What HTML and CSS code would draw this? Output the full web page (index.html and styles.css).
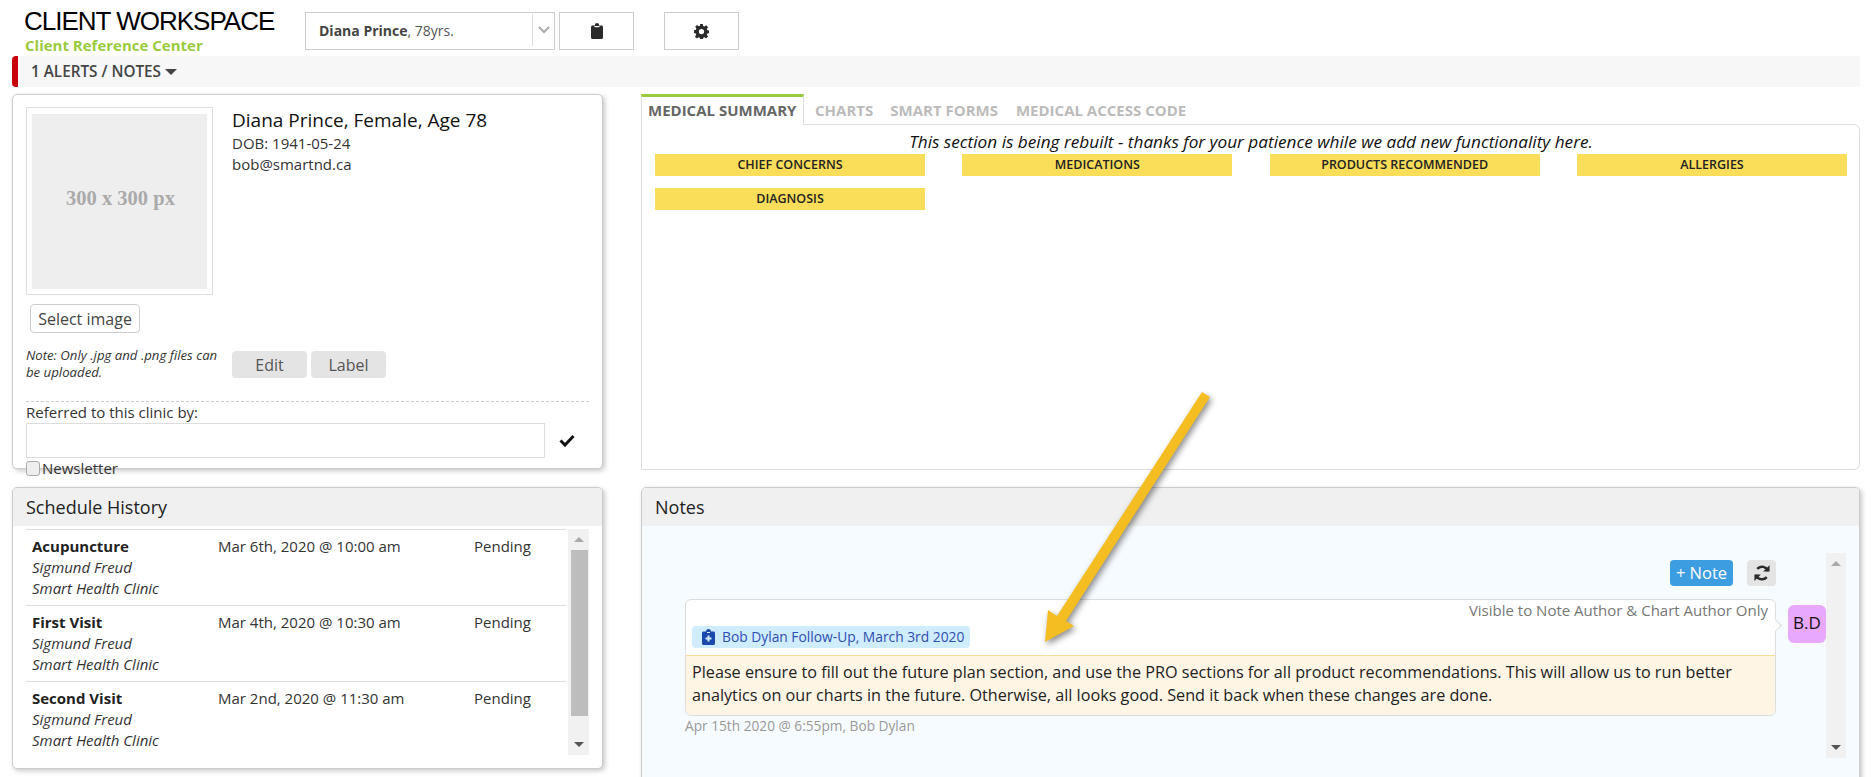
FILE: index.html
```html
<!DOCTYPE html>
<html lang="en">
<head>
<meta charset="utf-8">
<title>Client Workspace</title>
<link rel="stylesheet" href="styles.css">
</head>
<body>
<header class="topbar">
  <div class="brand">
    <div class="brand-title">CLIENT WORKSPACE</div>
    <div class="brand-sub">Client Reference Center</div>
  </div>
  <div class="client-select">
    <div class="client-name"><b>Diana Prince</b>, 78yrs.</div>
    <div class="client-caret"><svg width="14" height="10" viewBox="0 0 14 10"><path d="M2 2l5 5 5-5" fill="none" stroke="#aaa" stroke-width="2"/></svg></div>
  </div>
  <button class="tool-btn"><svg width="12" height="16" viewBox="0 0 12 16"><path d="M1.500 2.500H4V1.600C4 .8 4.800 0 6 0s2 .8 2 1.600v.9h2.500c.8 0 1.500.7 1.500 1.500v10.500c0 .8-.7 1.500-1.500 1.500h-9C.7 16 0 15.300 0 14.500V4c0-.8.7-1.500 1.500-1.500z" fill="#2b2b2b"/><rect x="3.500" y="3" width="5" height="1.200" fill="#fff"/></svg></button>
  <button class="tool-btn tool-btn-gap"><svg width="15" height="15" viewBox="0 0 16 16"><path fill="#2b2b2b" fill-rule="evenodd" d="M6.600 0h2.800l.4 2.200 1.300.55 1.850-1.300 2 2-1.300 1.850.55 1.300 2.200.4v2.800l-2.200.4-.55 1.300 1.300 1.850-2 2-1.850-1.300-1.300.55-.4 2.200H6.600l-.4-2.200-1.300-.55-1.850 1.300-2-2 1.300-1.850-.55-1.300L-.2 9.400V6.600l2.200-.4.55-1.300-1.300-1.850 2-2 1.850 1.300 1.300-.55zM8 5.200a2.800 2.800 0 1 0 0 5.600 2.800 2.800 0 0 0 0-5.600z"/></svg></button>
</header>

<div class="alert-bar">1 ALERTS / NOTES <span class="alert-caret"></span></div>

<main class="layout">
  <section class="card profile">
    <div class="profile-top">
      <div class="profile-left">
        <div class="photo-frame"><div class="photo">300 x 300 px</div></div>
        <button class="select-image">Select image</button>
        <p class="upload-note">Note: Only .jpg and .png files can be uploaded.</p>
      </div>
      <div class="profile-right">
        <div class="profile-info">
          <h1 class="profile-name">Diana Prince, Female, Age 78</h1>
          <div>DOB: 1941-05-24</div>
          <div>bob@smartnd.ca</div>
        </div>
        <div class="profile-actions">
          <button class="grey-btn">Edit</button>
          <button class="grey-btn">Label</button>
        </div>
      </div>
    </div>
    <div class="referred">
      <label class="referred-label" for="ref">Referred to this clinic by:</label>
      <div class="referred-row">
        <input class="referred-input" id="ref" type="text">
        <svg class="check" width="16" height="13" viewBox="0 0 16 13"><path d="M1.500 6.500l4.500 4.500 8.500-9" fill="none" stroke="#111" stroke-width="3"/></svg>
      </div>
      <label class="newsletter"><span class="fake-check"></span>Newsletter</label>
    </div>
  </section>

  <section class="tabs-area">
    <nav class="tabs">
      <span class="tab active">MEDICAL SUMMARY</span>
      <span class="tab">CHARTS</span>
      <span class="tab">SMART FORMS</span>
      <span class="tab">MEDICAL ACCESS CODE</span>
    </nav>
    <div class="tab-panel">
      <p class="rebuild-note">This section is being rebuilt - thanks for your patience while we add new functionality here.</p>
      <div class="summary-grid">
        <div class="summary-head">CHIEF CONCERNS</div>
        <div class="summary-head">MEDICATIONS</div>
        <div class="summary-head">PRODUCTS RECOMMENDED</div>
        <div class="summary-head">ALLERGIES</div>
        <div class="summary-head">DIAGNOSIS</div>
      </div>
    </div>
  </section>

  <section class="card schedule">
    <h2 class="card-head">Schedule History</h2>
    <div class="schedule-body">
      <div class="schedule-list">
        <div class="visit">
          <div class="visit-main"><b>Acupuncture</b><i>Sigmund Freud</i><i>Smart Health Clinic</i></div>
          <div class="visit-date">Mar 6th, 2020 @ 10:00 am</div>
          <div>Pending</div>
        </div>
        <div class="visit">
          <div class="visit-main"><b>First Visit</b><i>Sigmund Freud</i><i>Smart Health Clinic</i></div>
          <div class="visit-date">Mar 4th, 2020 @ 10:30 am</div>
          <div>Pending</div>
        </div>
        <div class="visit">
          <div class="visit-main"><b>Second Visit</b><i>Sigmund Freud</i><i>Smart Health Clinic</i></div>
          <div class="visit-date">Mar 2nd, 2020 @ 11:30 am</div>
          <div>Pending</div>
        </div>
      </div>
      <div class="scrollbar schedule-scroll">
        <span class="arrow-up"></span>
        <span class="thumb"></span>
        <span class="arrow-down"></span>
      </div>
    </div>
  </section>

  <section class="card notes">
    <h2 class="card-head">Notes</h2>
    <div class="notes-body">
      <div class="notes-content">
        <div class="notes-actions">
          <button class="note-btn">+ Note</button>
          <button class="refresh-btn"><svg width="18" height="18" viewBox="0 0 16 16"><path d="M13.300 6.500A5.500 5.500 0 0 0 3.800 4.300" fill="none" stroke="#2b2b2b" stroke-width="2.200"/><path d="M14.700 1v5.600H9z" fill="#2b2b2b"/><path d="M2.700 9.500a5.500 5.500 0 0 0 9.500 2.200" fill="none" stroke="#2b2b2b" stroke-width="2.200"/><path d="M1.300 15V9.400H7z" fill="#2b2b2b"/></svg></button>
        </div>
        <div class="note-row">
          <div class="note-column">
            <article class="note">
              <div class="note-top">
                <div class="note-visibility">Visible to Note Author &amp; Chart Author Only</div>
                <span class="note-pill">
                  <svg width="13" height="16" viewBox="0 0 13 16"><path fill="#1a49ab" fill-rule="evenodd" d="M1.500 2.500H4C4 1 5 0 6.500 0S9 1 9 2.500h2.500c.8 0 1.500.7 1.500 1.500v10.500c0 .8-.7 1.500-1.500 1.500h-10C.7 16 0 15.300 0 14.500V4c0-.8.7-1.500 1.500-1.500zM5.500 6.500v2h-2v2h2v2h2v-2h2v-2h-2v-2zM5 3v1h3V3z"/></svg>
                  Bob Dylan Follow-Up, March 3rd 2020
                </span>
              </div>
              <div class="note-text">Please ensure to fill out the future plan section, and use the PRO sections for all product recommendations. This will allow us to run better analytics on our charts in the future. Otherwise, all looks good. Send it back when these changes are done.</div>
              <span class="note-tail"></span>
            </article>
            <div class="note-meta">Apr 15th 2020 @ 6:55pm, Bob Dylan</div>
          </div>
          <div class="avatar">B.D</div>
        </div>
      </div>
      <div class="scrollbar notes-scroll">
        <span class="arrow-up"></span>
        <span class="arrow-down"></span>
      </div>
    </div>
  </section>
</main>

<svg class="callout" width="1871" height="777" viewBox="0 0 1871 777"><path d="M1202 392l8 5-144 224 8 5-29 16 3-32 9 6z" fill="#f4bd22"/></svg>
</body>
</html>
```

FILE: styles.css
```css
* { box-sizing: border-box; }
html, body { margin: 0; height: 100%; overflow: hidden; background: #fff; }
body { font-family: "Open Sans", "Liberation Sans", sans-serif; font-size: 15px; line-height: 21px; color: #222; }
button { font-family: inherit; cursor: pointer; }

.topbar { display: flex; align-items: flex-start; height: 56px; padding: 12px 0 0 24px; }
.brand { width: 281px; margin-top: -5px; }
.brand-title { font-family: "Liberation Sans", Arial, sans-serif; font-size: 26px; line-height: 28px; letter-spacing: -1px; color: #000; }
.brand-sub { font-size: 15px; line-height: 19px; font-weight: 700; color: #9acb3c; margin: 1px 0 0 1px; }
.client-select { display: flex; width: 250px; height: 38px; border: 1px solid #ccc; }
.client-name { flex: 1; padding: 0 13px; line-height: 36px; font-size: 14px; color: #555; }
.client-name b { font-weight: 700; color: #444; }
.client-caret { width: 22px; margin: 1px 0 3px; border-left: 1px solid #ddd; display: flex; align-items: center; justify-content: center; }
.tool-btn { display: flex; align-items: center; justify-content: center; width: 75px; height: 38px; margin-left: 4px; padding: 0; background: #fff; border: 1px solid #ccc; }
.tool-btn-gap { margin-left: 30px; }

.alert-bar { height: 31px; margin: 0 11px 0 12px; padding-left: 13px; background: #f7f7f7; border-left: 6px solid #c8000a; border-radius: 4px 0 0 4px; font-size: 15.300px; line-height: 31px; font-weight: 600; color: #444; }
.alert-caret { display: inline-block; width: 0; height: 0; border: 6px solid transparent; border-top: 6px solid #444; border-bottom: 0; vertical-align: 2px; }

.layout { display: grid; grid-template-columns: 591px 1219px; grid-template-rows: 376px 1fr; column-gap: 38px; row-gap: 17px; padding: 7px 11px 0 12px; height: 690px; }
.card { background: #fff; border: 1px solid #ccc; border-radius: 5px; box-shadow: 2px 2px 5px rgba(0,0,0,.22); }

.profile { height: 375px; padding: 12px 13px 0; }
.profile-top { display: flex; height: 294px; }
.profile-left { width: 206px; }
.photo-frame { width: 187px; height: 188px; padding: 6px 5px; border: 1px solid #ddd; }
.photo { display: flex; align-items: center; justify-content: center; width: 175px; height: 175px; padding: 0 0 6px 2px; background: #eee; font-family: "Liberation Serif", serif; font-size: 20.500px; font-weight: 700; color: #aaa; }
.select-image { display: block; width: 110px; height: 29px; margin: 9px 0 0 4px; padding: 0; background: #fff; border: 1px solid #ccc; border-radius: 4px; font-size: 16px; color: #444; }
.upload-note { margin: 14px 0 0 0; font-size: 13.200px; line-height: 17px; font-style: italic; color: #333; width: 195px; }
.profile-name { margin: 0; font-size: 19px; line-height: 26px; font-weight: 500; color: #111; }
.profile-info { height: 244px; }
.profile-info div { line-height: 21px; color: #333; }
.profile-actions { display: flex; gap: 4px; }
.grey-btn { width: 75px; height: 27px; padding: 0; background: #e4e4e4; border: 0; border-radius: 4px; font-size: 16px; color: #555; }

.referred { border-top: 1px dashed #ccc; }
.referred-label { display: block; font-size: 15px; line-height: 21px; color: #333; }
.referred-row { display: flex; align-items: center; }
.referred-input { width: 519px; height: 35px; border: 1px solid #ddd; background: #fff; }
.check { margin-left: 14px; }
.newsletter { display: flex; align-items: center; height: 16px; margin-top: 2px; font-size: 15px; color: #333; }
.fake-check { width: 14px; height: 15px; margin-right: 2px; background: #eee; border: 1px solid #aaa; border-radius: 3px; }

.tabs-area { display: flex; flex-direction: column; height: 376px; }
.tabs { display: flex; height: 31px; margin-bottom: -1px; }
.tab { padding: 0 0 0 11px; font-size: 15px; line-height: 27px; font-weight: 700; color: #bbb; border-top: 3px solid transparent; }
.tab.active { width: 163px; padding: 0 0 0 6px; color: #666; background: #fff; border-top-color: #9acb3c; border-left: 1px solid #ddd; border-right: 1px solid #ddd; position: relative; z-index: 1; height: 31px; }
.tab:nth-child(3) { padding-left: 17px; }
.tab:nth-child(4) { padding-left: 18px; }
.tab-panel { flex: 1; border: 1px solid #ddd; border-radius: 0 6px 6px 0; padding: 5px 12px 0 13px; }
.rebuild-note { margin: 0; text-align: center; font-size: 17.200px; line-height: 24px; font-style: italic; color: #111; white-space: nowrap; }
.summary-grid { display: grid; grid-template-columns: repeat(4, 270px); justify-content: space-between; row-gap: 12px; }
.summary-head { height: 22px; background: #fadd59; text-align: center; font-size: 12.500px; line-height: 22px; font-weight: 600; color: #222; }

.card-head { margin: 0; height: 38px; padding-left: 13px; background: #f0f0f0; border-radius: 4px 4px 0 0; font-size: 18px; line-height: 38px; font-weight: 500; color: #222; }
.schedule { height: 282px; }
.schedule-body { display: flex; padding: 3px 13px 0; }
.schedule-list { width: 543px; }
.visit { display: grid; grid-template-columns: 186px 256px 1fr; height: 76px; padding: 6px 0 0 6px; border-top: 1px solid #ddd; color: #333; }
.visit-main b { display: block; font-weight: 700; color: #222; }
.visit-main i { display: block; color: #333; }
.scrollbar { position: relative; background: #f1f1f1; }
.schedule-scroll { width: 21px; height: 226px; margin-left: 2px; }
.thumb { position: absolute; left: 3px; top: 21px; width: 17px; height: 166px; background: #bdbdbd; }
.arrow-up, .arrow-down { position: absolute; left: 50%; width: 0; height: 0; margin-left: -5px; border-left: 5px solid transparent; border-right: 5px solid transparent; }
.arrow-up { top: 8px; border-bottom: 5px solid #aaa; }
.arrow-down { bottom: 8px; border-top: 5px solid #555; }

.notes { position: relative; height: 320px; }
.notes-body { display: flex; height: 282px; padding: 27px 13px 0 43px; background: #f6fbff; }
.notes-content { width: 1141px; }
.notes-actions { display: flex; justify-content: flex-end; gap: 14px; height: 26px; margin: 7px 50px 13px 0; }
.note-btn { width: 63px; height: 26px; padding: 0; background: #3c9de0; border: 0; border-radius: 4px; color: #fff; font-size: 16.500px; line-height: 26px; }
.refresh-btn { display: flex; align-items: center; justify-content: center; width: 29px; height: 26px; padding: 0; background: #e4e4e4; border: 0; border-radius: 4px; }
.note-row { display: flex; align-items: flex-start; }
.note-column { width: 1091px; }
.note { position: relative; background: #fff; border: 1px solid #ddd; border-radius: 6px; height: 117px; }
.note-top { height: 55px; padding: 0 7px 0 6px; }
.note-visibility { text-align: right; font-size: 15px; line-height: 21px; color: #777; }
.note-pill { display: inline-flex; align-items: center; gap: 7px; height: 22px; margin-top: 5px; padding: 0 6px 0 10px; background: #d0ecff; border-radius: 4px; font-size: 13.800px; line-height: 22px; color: #2d4fb0; }
.note-text { height: 60px; padding: 5px 6px 0; background: #fff5e4; border-top: 1px solid #fadd9c; border-radius: 0 0 6px 6px; font-size: 16.200px; line-height: 23px; color: #222; }
.note-tail { position: absolute; right: -5px; top: 21px; width: 9px; height: 9px; background: #fff; border-top: 1px solid #ddd; border-right: 1px solid #ddd; transform: rotate(45deg); }
.note-meta { font-size: 13.700px; line-height: 20px; color: #999; }
.avatar { width: 38px; height: 38px; margin: 6px 0 0 12px; background: #e8a8fc; border-radius: 6px; text-align: center; font-size: 17px; line-height: 36px; color: #111; }
.notes-scroll { width: 21px; height: 205px; }

.callout { position: absolute; left: 0; top: 0; pointer-events: none; filter: drop-shadow(2px 3px 3px rgba(0,0,0,.45)); }
```
